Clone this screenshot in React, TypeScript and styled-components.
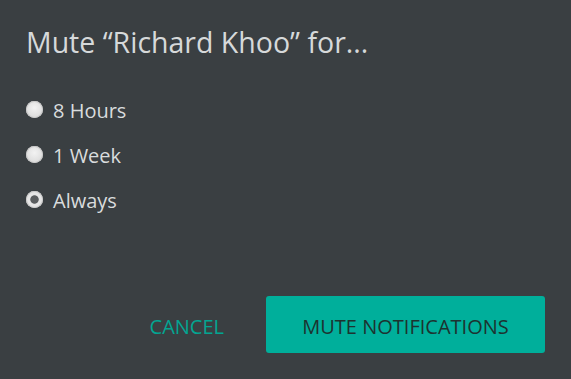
import styled, { createGlobalStyle } from "styled-components"

const GlobalStyle = createGlobalStyle`
html, body {
  margin: 0;
  padding: 0;
  background-color: #3a3f42;
}
`

const options = ["8 Hours", "1 Week", "Always"]

const App = () => {
    const selected = "Always"
    return (
        <Dialog>
            <GlobalStyle />
            <Title>Mute “Richard Khoo” for...</Title>
            <Options>
                {options.map((o) => (
                    <Option key={o}>
                        <Radio checked={o === selected} />
                        <Label>{o}</Label>
                    </Option>
                ))}
            </Options>
            <Footer>
                <Cancel>CANCEL</Cancel>
                <Primary>MUTE NOTIFICATIONS</Primary>
            </Footer>
        </Dialog>
    )
}

export default App

const Dialog = styled.div`
width: 571px;
height: 379px;
box-sizing: border-box;
padding: 24px 26px 0 26px;
display: flex;
flex-direction: column;
background-color: #3a3f42;
font-family: "Open Sans", "Noto Sans", sans-serif;
color: #d9dcdd;
`
const Title = styled.div`
font-size: 28.5px;
line-height: 36px;
color: #d6d9da;
`
const Options = styled.div`
display: flex;
flex-direction: column;
gap: 19px;
margin-top: 37px;
`
const Option = styled.div`
display: flex;
align-items: center;
gap: 10px;
height: 26px;
`
const Radio = styled.span<{ checked?: boolean }>`
width: 17px;
height: 17px;
border-radius: 50%;
box-sizing: border-box;
margin-top: -1px;
background: ${(p) =>
    p.checked
        ? "radial-gradient(circle, #5b5e60 0 3.8px, #e6e6e6 4.6px)"
        : "radial-gradient(circle at 50% 40%, #f2f2f2, #d4d4d4)"};
box-shadow: inset 0 0 0 1px #c8c8c8;
`
const Label = styled.span`
font-size: 20px;
color: #d9dcdd;
`
const Footer = styled.div`
margin-top: auto;
margin-bottom: 26px;
display: flex;
justify-content: flex-end;
align-items: center;
`
const Cancel = styled.div`
font-size: 20px;
color: #03a592;
margin-right: 42px;
padding-top: 3px;
cursor: pointer;
`
const Primary = styled.div`
width: 279px;
height: 57px;
padding-top: 3px;
box-sizing: border-box;
display: flex;
align-items: center;
justify-content: center;
background-color: #00af9b;
border-radius: 3px;
color: #1d3330;
font-size: 20px;
cursor: pointer;
`
